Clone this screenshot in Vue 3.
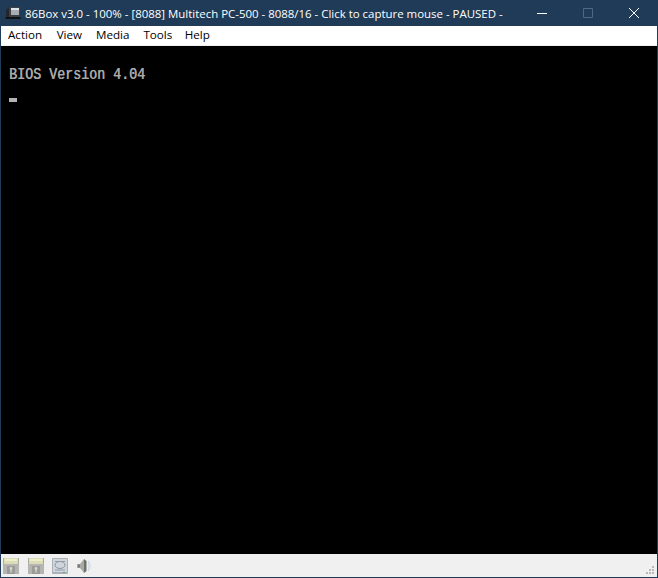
<script setup>
const menus = ['Action', 'View', 'Media', 'Tools', 'Help']
const grip = [[9,0],[6,3],[9,3],[3,6],[6,6],[9,6]]
const floppies = ['second-a', 'second-b']
</script>

<template>
  <div class="window">
    <header class="titlebar">
      <svg class="appicon" width="18" height="16" viewBox="0 0 18 16">
        <path d="M5 2h11v10H5z" fill="#3c4046"/>
        <path d="M7 3h8v7H7z" fill="#a9adb1"/>
        <path d="M7 3h8v2H7z" fill="#dfe2e4"/>
        <path d="M2 12h14l1 2H1z" fill="#101215"/>
        <path d="M5 2L2 5v7h3z" fill="#23272c"/>
      </svg>
      <span class="title">86Box v3.0 - 100% - [8088] Multitech PC-500 - 8088/16 - Click to capture mouse - PAUSED -</span>
      <div class="controls">
        <span class="ctl"><svg width="10" height="10" viewBox="0 0 10 10"><path d="M0 5.5h10" stroke="#fff" fill="none"/></svg></span>
        <span class="ctl"><svg width="10" height="10" viewBox="0 0 10 10"><path d="M.5.5h9v9h-9z" stroke="#4f6780" fill="none"/></svg></span>
        <span class="ctl"><svg width="10" height="10" viewBox="0 0 10 10"><path d="M0 0l10 10M10 0L0 10" stroke="#fff" fill="none"/></svg></span>
      </div>
    </header>
    <nav class="menubar">
      <span v-for="m in menus" :key="m" class="menu">{{ m }}</span>
    </nav>
    <main class="screen">
      <div class="bios">BIOS Version 4.04</div>
      <div class="cursor"></div>
    </main>
    <footer class="status">
      <svg v-for="f in floppies" :key="f" class="sicon" :class="f" width="16" height="16" viewBox="0 0 16 16">
        <rect width="16" height="16" fill="#aaaba7"/>
        <rect y="6" width="16" height="10" fill="#b4b5b1"/>
        <rect x="1" width="14" height="6" fill="#dcdcb6"/>
        <rect x="2" y="1" width="12" height="2" fill="#eeeecb"/>
        <rect x="4" y="8" width="8" height="8" fill="#9b9c98"/>
        <circle cx="8" cy="10.5" r="1.4" fill="#d8d8d4"/>
        <rect x="7.4" y="11.5" width="1.2" height="3" fill="#dcdcd8"/>
      </svg>
      <svg class="sicon" width="16" height="16" viewBox="0 0 16 16">
        <rect width="16" height="16" rx="1" fill="#a9b1b9"/>
        <rect x="1" y="1" width="14" height="13" fill="#cfd5db"/>
        <ellipse cx="8" cy="7" rx="5" ry="3.5" fill="none" stroke="#8b96a0"/>
        <path d="M3 3.5h10M3 12h10" stroke="#939ea8"/>
        <rect x="11" y="14" width="2" height="1" fill="#5faa62"/>
      </svg>
      <svg class="sicon" width="16" height="16" viewBox="0 0 16 16">
        <path d="M1 6h3l4-5v14l-4-5H1z" fill="#a9aba6"/>
        <path d="M2 6.5h2v3H2z" fill="#7a7c77"/>
        <path d="M8 1l2.5 2v10L8 15z" fill="#6f716c"/>
        <path d="M12.5 3q1.5 5 0 10" stroke="#c3d3e2" fill="none"/>
        <path d="M14.5 5q.7 3 0 6" stroke="#dde6ef" fill="none"/>
      </svg>
      <span class="grip">
        <i v-for="(g, i) in grip" :key="i" class="dot" :style="{ left: g[0] + 'px', top: g[1] + 'px' }"></i>
      </span>
    </footer>
  </div>
</template>

<style>
html, body { margin: 0; padding: 0; }
</style>

<style scoped>
.window {
  width: 658px;
  height: 578px;
  box-sizing: border-box;
  display: flex;
  flex-direction: column;
  background: #1f3b57;
  border: 1px solid #1f3b57;
  border-top: 0;
  overflow: hidden;
}
.titlebar {
  height: 26px;
  flex: none;
  display: flex;
  align-items: center;
  color: #fff;
  font: 11.45px "Open Sans", "Noto Sans", sans-serif;
}
.appicon { margin-left: 3px; flex: none; }
.title { margin-left: 3px; white-space: nowrap; flex: 1; }
.controls { display: flex; flex: none; }
.ctl {
  width: 46px;
  height: 26px;
  display: flex;
  align-items: center;
  justify-content: center;
}
.menubar {
  height: 19px;
  flex: none;
  box-sizing: content-box;
  background: #fff;
  border-bottom: 1px solid #f0f0f0;
  display: flex;
  align-items: flex-start;
  font: 11.6px/17px "Open Sans", "Noto Sans", sans-serif;
  color: #000;
}
.menu { padding: 0 7px; }
.menu:nth-child(2) { margin-left: 0.6px; }
.menu:nth-child(4) { margin-right: -1.4px; }
.screen {
  flex: 1;
  background: #000;
  padding: 19px 0 0 8px;
  min-height: 0;
}
.bios {
  font: 13.33px/20px "Liberation Mono", monospace;
  color: #aaa;
  white-space: nowrap;
  text-shadow: 0.5px 0 0 #aaa;
  transform: scaleY(1.3);
  transform-origin: 0 50%;
}
.cursor {
  width: 8px;
  height: 4px;
  margin-top: 13px;
  background: #b4b4b4;
}
.status {
  height: 23px;
  flex: none;
  background: #f0f0f0;
  display: flex;
  align-items: center;
  gap: 8px;
  padding-left: 2px;
  position: relative;
}
.sicon { flex: none; }
.second-b { margin-left: 1px; }
.grip { position: absolute; right: 2px; bottom: 2px; width: 12px; height: 9px; }
.dot { position: absolute; width: 2px; height: 2px; background: #b8b8b8; }
</style>
